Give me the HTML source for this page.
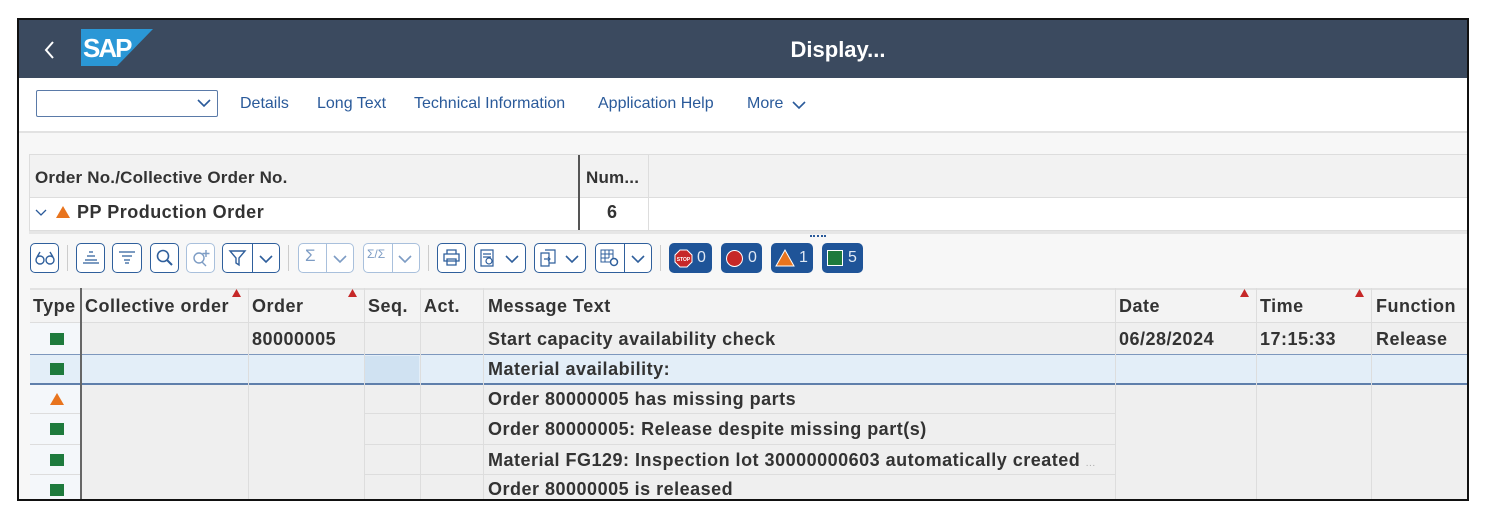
<!DOCTYPE html>
<html><head><meta charset="utf-8"><style>
*{box-sizing:border-box;margin:0;padding:0}
body{width:1485px;height:516px;background:#fff;position:relative;overflow:hidden;font-family:"Liberation Sans",Arial,sans-serif}
.a{position:absolute}
.frame{left:17px;top:18px;width:1452px;height:483px;border:2px solid #111;background:#f7f7f7;overflow:hidden}
.hdr{left:0;top:0;width:1450px;height:58px;background:#3b4a5f}
.tb{left:0;top:58px;width:1450px;height:55px;background:#fff;border-bottom:2px solid #e2e2e2}
.lnk{font-size:16px;color:#2a5a9a}
.b{font-weight:bold;color:#333;font-size:18px;letter-spacing:0.5px;white-space:nowrap}
.btn{top:243px;height:30px;border:1.5px solid #2f5f9c;border-radius:5px;background:#fff}
.btn.l{border-color:#a9c0dc}
.st{top:243px;height:30px;background:#1f5498;border-radius:5px}
.stn{top:249px;color:#dfe8f4;font-size:16px}
.sep{top:245px;width:1px;height:26px;background:#ccc}
.vl{width:1px;background:#ddd}
svg{position:absolute;overflow:visible}
</style></head><body>
<div class="a frame">
 <div class="a hdr"></div>
 <div class="a tb"></div>
</div>
<svg style="left:42px;top:40px" width="14" height="20"><path d="M11 2 L4 10 L11 18" stroke="#fff" stroke-width="2" fill="none"/></svg>
<svg style="left:81px;top:29px" width="72" height="37"><polygon points="0,0 72,0 36,37 0,37" fill="#2a97d6"/><text x="2" y="28" font-family="Liberation Sans" font-weight="bold" font-size="26" fill="#fff" letter-spacing="-2">SAP</text></svg>
<div class="a" style="left:0;width:1485px;top:37px;text-align:center;padding-left:191px;color:#fff;font-weight:bold;font-size:22px">Display...</div>
<div class="a" style="left:36px;top:90px;width:182px;height:27px;border:1.5px solid #5a7aa8;border-radius:2px;background:#fff"></div>
<svg style="left:197px;top:99px" width="14" height="9"><path d="M1 1 L7 7 L13 1" stroke="#2a5a9a" stroke-width="1.6" fill="none"/></svg>
<div class="a lnk" style="left:240px;top:95px">Details</div>
<div class="a lnk" style="left:317px;top:95px">Long Text</div>
<div class="a lnk" style="left:414px;top:95px">Technical Information</div>
<div class="a lnk" style="left:598px;top:95px">Application Help</div>
<div class="a lnk" style="left:747px;top:95px">More</div>
<svg style="left:792px;top:101px" width="14" height="9"><path d="M1 1 L7 7 L13 1" stroke="#2a5a9a" stroke-width="1.6" fill="none"/></svg>
<div class="a" style="left:29px;top:154px;width:1439px;height:77px;background:#fff;border:1.5px solid #ddd"></div>
<div class="a" style="left:30px;top:155px;width:1438px;height:43px;background:#f2f2f2;border-bottom:1px solid #ddd"></div>
<div class="a" style="left:578px;top:155px;width:1.5px;height:75px;background:#555"></div>
<div class="a vl" style="left:648px;top:155px;height:75px"></div>
<div class="a b" style="left:35px;top:168px;font-size:17px;letter-spacing:0.2px">Order No./Collective Order No.</div>
<div class="a b" style="left:586px;top:168px;font-size:17px;letter-spacing:0.2px">Num...</div>
<svg style="left:35px;top:209px" width="12" height="8"><path d="M1 1 L6 6 L11 1" stroke="#2a5a9a" stroke-width="1.3" fill="none"/></svg>
<svg style="left:56px;top:206px" width="14" height="12"><polygon points="7,0 14,12 0,12" fill="#e8741e"/></svg>
<div class="a b" style="left:77px;top:202px">PP Production Order</div>
<div class="a b" style="left:607px;top:202px">6</div>
<div class="a" style="left:29px;top:231px;width:1439px;height:3px;background:#e6e6e6"></div>
<div class="a" style="left:810px;top:235px;width:16px;height:2px;border-top:2px dotted #2a5a9a"></div>
<div class="a btn" style="left:30px;width:29px"></div>
<svg style="left:35px;top:251px" width="20" height="14"><circle cx="5" cy="9" r="4" stroke="#2f5f9c" stroke-width="1.4" fill="none"/><circle cx="15" cy="9" r="4" stroke="#2f5f9c" stroke-width="1.4" fill="none"/><path d="M2 6 L5 1 M18 6 L15 1" stroke="#2f5f9c" stroke-width="1.4"/></svg>
<div class="a sep" style="left:67px"></div>
<div class="a btn" style="left:76px;width:29px"></div>
<svg style="left:83px;top:250px" width="16" height="14"><path d="M6 2h4M4 6h8M2 10h12M0 13h16" stroke="#2f5f9c" stroke-width="1.3"/></svg>
<div class="a btn" style="left:112px;width:30px"></div>
<svg style="left:119px;top:251px" width="16" height="12"><path d="M0 1h16M3 5h10M5 9h6M6 12h4" stroke="#2f5f9c" stroke-width="1.3"/></svg>
<div class="a btn" style="left:150px;width:29px"></div>
<svg style="left:156px;top:249px" width="17" height="17"><circle cx="7" cy="7" r="5.5" stroke="#2f5f9c" stroke-width="1.6" fill="none"/><path d="M11 11 L16 16" stroke="#2f5f9c" stroke-width="2"/></svg>
<div class="a btn l" style="left:186px;width:29px"></div>
<svg style="left:192px;top:249px" width="18" height="17"><circle cx="7" cy="9" r="5" stroke="#7d9cc4" stroke-width="1.4" fill="none"/><path d="M10 13 L14 17 M14 1v7M10.5 4.5h7" stroke="#7d9cc4" stroke-width="1.4"/></svg>
<div class="a btn" style="left:222px;width:58px"></div>
<div class="a" style="left:252px;top:244px;width:1px;height:28px;background:#2f5f9c"></div>
<svg style="left:229px;top:250px" width="17" height="16"><path d="M1 1h15L10 8v7L7 13V8Z" stroke="#2f5f9c" stroke-width="1.4" fill="none"/></svg>
<svg style="left:259px;top:255px" width="14" height="8"><path d="M1 1 L7 7 L13 1" stroke="#2f5f9c" stroke-width="1.6" fill="none"/></svg>
<div class="a sep" style="left:288px"></div>
<div class="a btn l" style="left:298px;width:56px"></div>
<div class="a" style="left:326px;top:244px;width:1px;height:28px;background:#a9c0dc"></div>
<div class="a" style="left:305px;top:246px;color:#7d9cc4;font-size:17px">Σ</div>
<svg style="left:333px;top:255px" width="14" height="8"><path d="M1 1 L7 7 L13 1" stroke="#7d9cc4" stroke-width="1.6" fill="none"/></svg>
<div class="a btn l" style="left:363px;width:57px"></div>
<div class="a" style="left:392px;top:244px;width:1px;height:28px;background:#a9c0dc"></div>
<div class="a" style="left:367px;top:247px;color:#7d9cc4;font-size:12px">Σ/Σ</div>
<svg style="left:398px;top:255px" width="14" height="8"><path d="M1 1 L7 7 L13 1" stroke="#7d9cc4" stroke-width="1.6" fill="none"/></svg>
<div class="a sep" style="left:428px"></div>
<div class="a btn" style="left:437px;width:29px"></div>
<svg style="left:443px;top:249px" width="17" height="17"><path d="M4 5V1h9v4M1 5h15v7H1ZM4 10h9v6H4Z" stroke="#2f5f9c" stroke-width="1.3" fill="#fff"/></svg>
<div class="a btn" style="left:474px;width:52px"></div>
<svg style="left:480px;top:249px" width="16" height="18"><path d="M1 1h12v16H1ZM3 5h8M3 8h8" stroke="#2f5f9c" stroke-width="1.2" fill="none"/><circle cx="9" cy="12" r="3" stroke="#2f5f9c" stroke-width="1.2" fill="#fff"/></svg>
<svg style="left:505px;top:255px" width="14" height="8"><path d="M1 1 L7 7 L13 1" stroke="#2f5f9c" stroke-width="1.6" fill="none"/></svg>
<div class="a btn" style="left:534px;width:52px"></div>
<svg style="left:540px;top:249px" width="16" height="18"><path d="M1 4h8v13H1ZM5 1h10v13h-6M4 10h6M8 8l2 2-2 2" stroke="#2f5f9c" stroke-width="1.2" fill="none"/></svg>
<svg style="left:565px;top:255px" width="14" height="8"><path d="M1 1 L7 7 L13 1" stroke="#2f5f9c" stroke-width="1.6" fill="none"/></svg>
<div class="a btn" style="left:595px;width:57px"></div>
<div class="a" style="left:624px;top:244px;width:1px;height:28px;background:#2f5f9c"></div>
<svg style="left:600px;top:249px" width="19" height="18"><path d="M1 1h12v12H1ZM5 1v12M9 1v8M1 5h12M1 9h8" stroke="#2f5f9c" stroke-width="1" fill="none"/><circle cx="14" cy="13" r="3.5" stroke="#2f5f9c" stroke-width="1.5" fill="#fff"/></svg>
<svg style="left:631px;top:255px" width="14" height="8"><path d="M1 1 L7 7 L13 1" stroke="#2f5f9c" stroke-width="1.6" fill="none"/></svg>
<div class="a sep" style="left:660px"></div>
<div class="a st" style="left:669px;width:43px"></div>
<svg style="left:675px;top:250px" width="17" height="17"><polygon points="5,0 12,0 17,5 17,12 12,17 5,17 0,12 0,5" fill="#c62828" stroke="#fff" stroke-width="1"/><text x="8.5" y="11" font-size="5" fill="#fff" text-anchor="middle" font-weight="bold" font-family="Liberation Sans">STOP</text></svg>
<div class="a stn" style="left:697px">0</div>
<div class="a st" style="left:721px;width:41px"></div>
<svg style="left:726px;top:250px" width="17" height="17"><circle cx="8.5" cy="8.5" r="8" fill="#c62828" stroke="#fff" stroke-width="1"/></svg>
<div class="a stn" style="left:748px">0</div>
<div class="a st" style="left:771px;width:42px"></div>
<svg style="left:776px;top:250px" width="18" height="16"><polygon points="9,0 18,16 0,16" fill="#e8741e" stroke="#fff" stroke-width="1"/></svg>
<div class="a stn" style="left:799px">1</div>
<div class="a st" style="left:822px;width:41px"></div>
<svg style="left:827px;top:250px" width="16" height="16"><rect x="0.5" y="0.5" width="15" height="15" fill="#1e7a3c" stroke="#fff" stroke-width="1"/></svg>
<div class="a stn" style="left:848px">5</div>
<div class="a" style="left:30px;top:288px;width:1438px;height:212px;background:#efefef"></div>
<div class="a" style="left:30px;top:288px;width:1438px;height:35px;background:#f3f3f3;border-top:2px solid #e2e2e2;border-bottom:1px solid #ddd"></div>
<div class="a" style="left:30px;top:323px;width:51px;height:177px;background:#f4f7fa"></div>
<div class="a" style="left:30px;top:354px;width:1438px;height:31px;background:#e3eef8;border-top:1.5px solid #7d97bd;border-bottom:2px solid #5f7fab"></div>
<div class="a" style="left:365px;top:356px;width:54px;height:27px;background:#d0e2f2"></div>
<div class="a" style="left:80px;top:288px;width:1.5px;height:212px;background:#666"></div>
<div class="a vl" style="left:248px;top:288px;height:212px"></div>
<div class="a vl" style="left:364px;top:288px;height:212px"></div>
<div class="a vl" style="left:420px;top:288px;height:212px"></div>
<div class="a vl" style="left:483px;top:288px;height:212px"></div>
<div class="a vl" style="left:1115px;top:288px;height:212px"></div>
<div class="a vl" style="left:1256px;top:288px;height:212px"></div>
<div class="a vl" style="left:1371px;top:288px;height:212px"></div>
<div class="a" style="left:30px;top:413px;width:50px;height:1px;background:#ddd"></div>
<div class="a" style="left:30px;top:444px;width:50px;height:1px;background:#ddd"></div>
<div class="a" style="left:30px;top:474px;width:50px;height:1px;background:#ddd"></div>
<div class="a" style="left:364px;top:413px;width:751px;height:1px;background:#ddd"></div>
<div class="a" style="left:364px;top:444px;width:751px;height:1px;background:#ddd"></div>
<div class="a" style="left:364px;top:474px;width:751px;height:1px;background:#ddd"></div>
<svg style="left:232px;top:289px" width="9" height="8"><polygon points="4.5,0 9,8 0,8" fill="#c62828"/></svg>
<svg style="left:348px;top:289px" width="9" height="8"><polygon points="4.5,0 9,8 0,8" fill="#c62828"/></svg>
<svg style="left:1240px;top:289px" width="9" height="8"><polygon points="4.5,0 9,8 0,8" fill="#c62828"/></svg>
<svg style="left:1355px;top:289px" width="9" height="8"><polygon points="4.5,0 9,8 0,8" fill="#c62828"/></svg>
<div class="a b" style="left:33px;top:296px">Type</div>
<div class="a b" style="left:85px;top:296px">Collective order</div>
<div class="a b" style="left:252px;top:296px">Order</div>
<div class="a b" style="left:368px;top:296px">Seq.</div>
<div class="a b" style="left:424px;top:296px">Act.</div>
<div class="a b" style="left:488px;top:296px">Message Text</div>
<div class="a b" style="left:1119px;top:296px">Date</div>
<div class="a b" style="left:1260px;top:296px">Time</div>
<div class="a b" style="left:1376px;top:296px">Function</div>
<div class="a" style="left:50px;top:333px;width:14px;height:12px;background:#1e7a3c"></div>
<div class="a" style="left:50px;top:363px;width:14px;height:12px;background:#1e7a3c"></div>
<svg style="left:50px;top:393px" width="14" height="12"><polygon points="7,0 14,12 0,12" fill="#e8741e"/></svg>
<div class="a" style="left:50px;top:423px;width:14px;height:12px;background:#1e7a3c"></div>
<div class="a" style="left:50px;top:454px;width:14px;height:12px;background:#1e7a3c"></div>
<div class="a" style="left:50px;top:484px;width:14px;height:12px;background:#1e7a3c"></div>
<div class="a b" style="left:252px;top:329px">80000005</div>
<div class="a b" style="left:488px;top:329px">Start capacity availability check</div>
<div class="a b" style="left:1119px;top:329px">06/28/2024</div>
<div class="a b" style="left:1260px;top:329px">17:15:33</div>
<div class="a b" style="left:1376px;top:329px">Release</div>
<div class="a b" style="left:488px;top:359px">Material availability:</div>
<div class="a b" style="left:488px;top:389px">Order 80000005 has missing parts</div>
<div class="a b" style="left:488px;top:419px">Order 80000005: Release despite missing part(s)</div>
<div class="a b" style="left:488px;top:450px">Material FG129: Inspection lot 30000000603 automatically created <span style="color:#aaa;font-weight:normal;font-size:10px">...</span></div>
<div class="a b" style="left:488px;top:479px">Order 80000005 is released</div>
<div class="a" style="left:17px;top:18px;width:1452px;height:483px;border:2px solid #111"></div>
<div class="a" style="left:0;top:501px;width:1485px;height:15px;background:#fff"></div>
</body></html>
